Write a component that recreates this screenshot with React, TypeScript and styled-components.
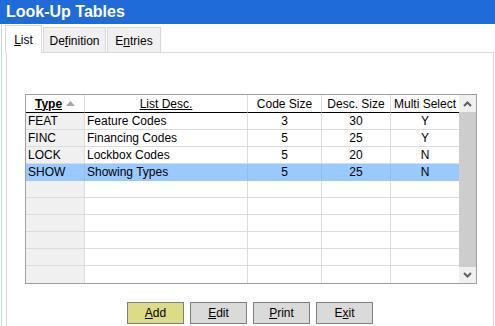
import React from 'react';
import styled, { createGlobalStyle } from 'styled-components';

const GlobalStyle = createGlobalStyle`
  html, body {
    margin: 0;
    padding: 0;
    background: #fff;
  }
  body {
    font-family: "Liberation Sans", Arial, sans-serif;
    font-size: 12px;
    color: #000;
  }
`;

const Window = styled.div`
  width: 495px;
  height: 326px;
  overflow: hidden;
  background: #fff;
  display: flex;
  flex-direction: column;
`;

const TitleBar = styled.div`
  flex: none;
  height: 24px;
  line-height: 24px;
  padding-left: 6px;
  background: #1f6bd8;
  color: #fff;
  font-weight: bold;
  font-size: 16px;
`;

const Body = styled.div`
  flex: 1;
  margin-left: 1px;
  border-left: 1px solid #c3d6ee;
  display: flex;
  flex-direction: column;
`;

const TabStrip = styled.div`
  flex: none;
  display: flex;
  align-items: flex-end;
  gap: 1px;
  height: 28px;
  padding-left: 3px;
  position: relative;
  z-index: 1;
`;

const Tab = styled.div<{ $active?: boolean; $w: number }>`
  box-sizing: border-box;
  width: ${p => p.$w}px;
  height: ${p => (p.$active ? 28 : 25)}px;
  margin-bottom: ${p => (p.$active ? -1 : 0)}px;
  padding-top: ${p => (p.$active ? 0 : 1)}px;
  border: 1px solid #d9d9d9;
  border-bottom: none;
  background: ${p => (p.$active ? '#fff' : '#f0f0f0')};
  display: flex;
  align-items: center;
  justify-content: center;
`;

const Panel = styled.div`
  flex: 1;
  box-sizing: border-box;
  width: 488px;
  margin-left: 4px;
  border: 1px solid #d9d9d9;
  border-bottom: none;
  padding-top: 41px;
  display: flex;
  flex-direction: column;
`;

const Grid = styled.div`
  width: 452px;
  box-sizing: border-box;
  margin-left: 18px;
  border: 1px solid #a0a0a0;
  display: flex;
`;

const Table = styled.div`
  display: grid;
  grid-template-columns: 59px 163px 74px 69px 68px;
  grid-template-rows: 18px;
  grid-auto-rows: 17px;
`;

const HeadCell = styled.div<{ $last?: boolean }>`
  box-sizing: border-box;
  border-bottom: 1px solid #000;
  border-right: ${p => (p.$last ? 'none' : '1px solid #dcdcdc')};
  display: flex;
  align-items: center;
  justify-content: center;
  white-space: nowrap;
  background: #fff;
`;

const SortLabel = styled.span<{ $bold?: boolean }>`
  text-decoration: underline;
  font-weight: ${p => (p.$bold ? 'bold' : 'normal')};
`;

const SortArrow = styled.svg`
  margin-left: 4px;
  margin-bottom: 1px;
`;

const Cell = styled.div<{ $last?: boolean; $lastRow?: boolean; $key?: boolean; $selected?: boolean; $center?: boolean }>`
  box-sizing: border-box;
  border-right: ${p => (p.$last ? 'none' : `1px solid ${p.$selected ? '#8fbdf0' : '#dcdcdc'}`)};
  border-bottom: ${p => (p.$lastRow ? 'none' : `1px solid ${p.$selected ? '#99c9ff' : '#dcdcdc'}`)};
  background: ${p => (p.$selected ? '#99c9ff' : p.$key ? '#f0f0f0' : '#fff')};
  display: flex;
  align-items: center;
  justify-content: ${p => (p.$center ? 'center' : 'flex-start')};
  padding-left: ${p => (p.$center ? 0 : 2)}px;
  white-space: nowrap;
  overflow: hidden;
`;

const ScrollBar = styled.div`
  width: 17px;
  display: flex;
  flex-direction: column;
`;

const ScrollButton = styled.div<{ $h: number }>`
  height: ${p => p.$h}px;
  background: #f0f0f0;
  display: flex;
  align-items: center;
  justify-content: center;
`;

const ScrollTrack = styled.div`
  flex: 1;
  background: #cdcdcd;
`;

const ButtonRow = styled.div`
  display: flex;
  justify-content: center;
  gap: 6px;
  margin-top: 18px;
`;

const Button = styled.button<{ $primary?: boolean }>`
  box-sizing: border-box;
  width: 57px;
  height: 22px;
  padding: 0;
  border: 1px solid #7f7f7f;
  background: ${p => (p.$primary ? '#dcdc86' : '#dadada')};
  font-family: "Liberation Sans", Arial, sans-serif;
  font-size: 12px;
  color: #000;
`;

type Row = { type: string; desc: string; code: string; size: string; multi: string; selected?: boolean };

const rows: Row[] = [
  { type: 'FEAT', desc: 'Feature Codes', code: '3', size: '30', multi: 'Y' },
  { type: 'FINC', desc: 'Financing Codes', code: '5', size: '25', multi: 'Y' },
  { type: 'LOCK', desc: 'Lockbox Codes', code: '5', size: '20', multi: 'N' },
  { type: 'SHOW', desc: 'Showing Types', code: '5', size: '25', multi: 'N', selected: true },
];

const TOTAL_ROWS = 10;

const Chevron = ({ up }: { up?: boolean }) => (
  <svg width="9" height="6" viewBox="0 0 9 6">
    <polyline
      points={up ? '1,5 4.5,1.5 8,5' : '1,1 4.5,4.5 8,1'}
      fill="none"
      stroke="#606060"
      strokeWidth="2"
    />
  </svg>
);

const App: React.FC = () => {
  const allRows: (Row | null)[] = [...rows, ...Array(TOTAL_ROWS - rows.length).fill(null)];

  return (
    <>
      <GlobalStyle />
      <Window>
        <TitleBar>Look-Up Tables</TitleBar>
        <Body>
          <TabStrip>
            <Tab $active $w={37}><span><u>L</u>ist</span></Tab>
            <Tab $w={63}><span>De<u>f</u>inition</span></Tab>
            <Tab $w={54}><span>E<u>n</u>tries</span></Tab>
          </TabStrip>
          <Panel>
            <Grid>
              <Table>
                <HeadCell>
                  <SortLabel $bold>Type</SortLabel>
                  <SortArrow width="9" height="5" viewBox="0 0 9 5">
                    <polygon points="0,5 4.5,0 9,5" fill="#a8a8a8" />
                  </SortArrow>
                </HeadCell>
                <HeadCell><SortLabel>List Desc.</SortLabel></HeadCell>
                <HeadCell>Code Size</HeadCell>
                <HeadCell>Desc. Size</HeadCell>
                <HeadCell $last>Multi Select</HeadCell>
                {allRows.map((r, i) => {
                  const lastRow = i === TOTAL_ROWS - 1;
                  const sel = !!r?.selected;
                  return (
                    <React.Fragment key={i}>
                      <Cell $key $selected={sel} $lastRow={lastRow}>{r?.type}</Cell>
                      <Cell $selected={sel} $lastRow={lastRow}>{r?.desc}</Cell>
                      <Cell $center $selected={sel} $lastRow={lastRow}>{r?.code}</Cell>
                      <Cell $center $selected={sel} $lastRow={lastRow}>{r?.size}</Cell>
                      <Cell $center $last $selected={sel} $lastRow={lastRow}>{r?.multi}</Cell>
                    </React.Fragment>
                  );
                })}
              </Table>
              <ScrollBar>
                <ScrollButton $h={17}><Chevron up /></ScrollButton>
                <ScrollTrack />
                <ScrollButton $h={16}><Chevron /></ScrollButton>
              </ScrollBar>
            </Grid>
            <ButtonRow>
              <Button $primary><u>A</u>dd</Button>
              <Button><u>E</u>dit</Button>
              <Button><u>P</u>rint</Button>
              <Button>E<u>x</u>it</Button>
            </ButtonRow>
          </Panel>
        </Body>
      </Window>
    </>
  );
};

export default App;
